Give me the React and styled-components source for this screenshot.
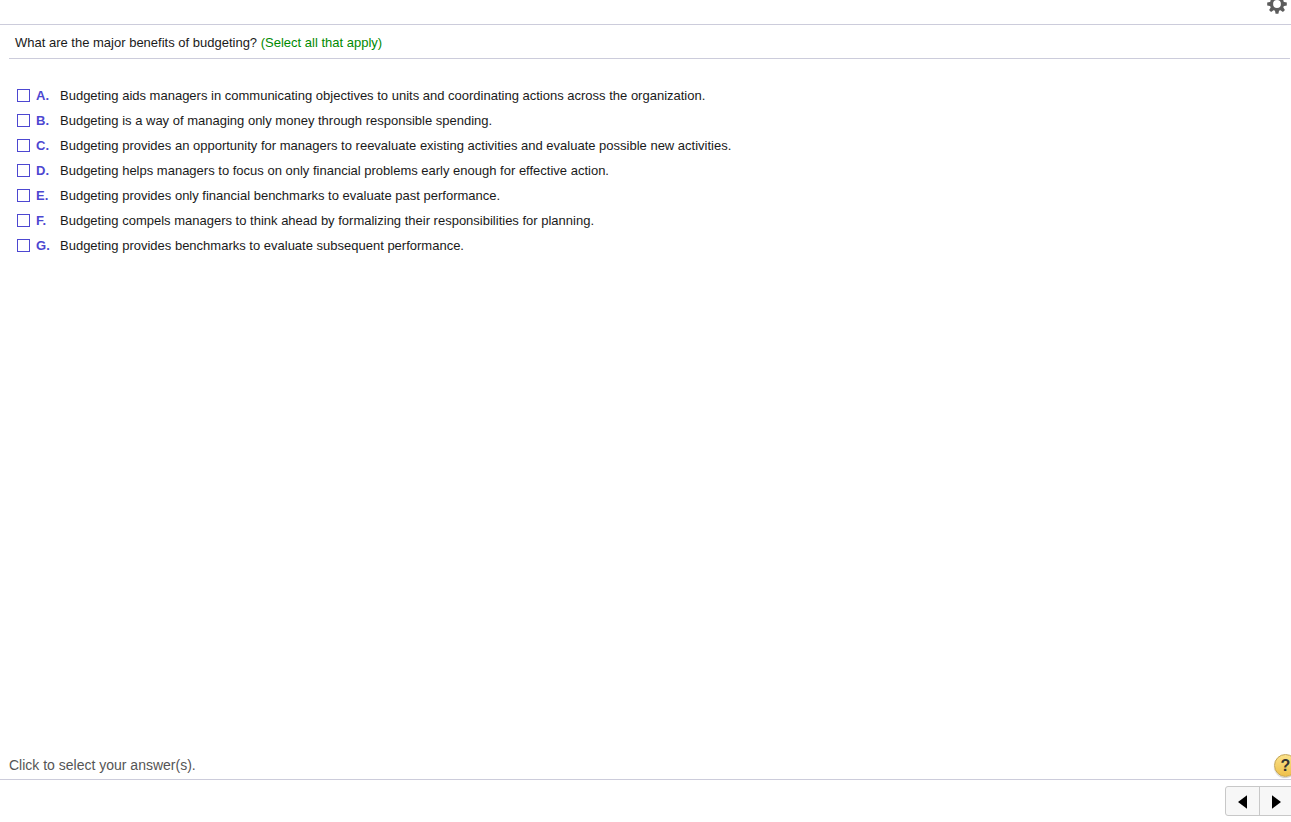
import React, { useState } from 'react'
import styled, { createGlobalStyle } from 'styled-components'

const ruleColor = '#ccccdb';
const accentColor = '#4d47d1';

const choices = [
  { letter: 'A', text: 'Budgeting aids managers in communicating objectives to units and coordinating actions across the organization.' },
  { letter: 'B', text: 'Budgeting is a way of managing only money through responsible spending.' },
  { letter: 'C', text: 'Budgeting provides an opportunity for managers to reevaluate existing activities and evaluate possible new activities.' },
  { letter: 'D', text: 'Budgeting helps managers to focus on only financial problems early enough for effective action.' },
  { letter: 'E', text: 'Budgeting provides only financial benchmarks to evaluate past performance.' },
  { letter: 'F', text: 'Budgeting compels managers to think ahead by formalizing their responsibilities for planning.' },
  { letter: 'G', text: 'Budgeting provides benchmarks to evaluate subsequent performance.' },
];

const teeth = [0, 45, 90, 135, 180, 225, 270, 315];

function GearIcon() {
  return (
    <svg width="20" height="20" viewBox="-10 -10 20 20" aria-hidden="true">
      <g fill="#5c5c5c">
        {teeth.map(angle => (
          <path key={angle} d="M-2.2 -6 L-1.4 -9.8 H1.4 L2.2 -6 Z" transform={`rotate(${angle})`}/>
        ))}
      </g>
      <circle r="5.5" fill="none" stroke="#5c5c5c" strokeWidth="3.2"/>
    </svg>
  )
}

function App() {
  const [selected, setSelected] = useState([]);

  const toggle = (letter) => {
    setSelected(selected.includes(letter)
      ? selected.filter(item => item !== letter)
      : [...selected, letter]);
  };

  return (
    <Page>
      <GlobalStyle/>
      <Header>
        <SettingsButton type="button" aria-label="Settings"><GearIcon/></SettingsButton>
      </Header>
      <Question>
        What are the major benefits of budgeting? <Hint>(Select all that apply)</Hint>
      </Question>
      <Choices>
        {choices.map(({ letter, text }) => (
          <Choice key={letter}>
            <Checkbox
              type="checkbox"
              checked={selected.includes(letter)}
              onChange={() => toggle(letter)}
            />
            <Letter>{letter}.</Letter>
            <span>{text}</span>
          </Choice>
        ))}
      </Choices>
      <StatusBar>
        <span>Click to select your answer(s).</span>
        <HelpButton type="button" aria-label="Help">?</HelpButton>
      </StatusBar>
      <Footer>
        <Pager>
          <PagerButton type="button" aria-label="Previous">
            <svg width="9" height="14" viewBox="0 0 9 14"><path d="M0 7 L9 0.2 V13.8 Z"/></svg>
          </PagerButton>
          <PagerButton type="button" aria-label="Next">
            <svg width="9" height="14" viewBox="0 0 9 14"><path d="M9 7 L0 0.2 V13.8 Z"/></svg>
          </PagerButton>
        </Pager>
      </Footer>
    </Page>
  )
}

export default App

const GlobalStyle = createGlobalStyle`
    * {
        box-sizing: border-box;
    }
    body {
        margin: 0;
        background-color: white;
        font-family: "Liberation Sans", Arial, sans-serif;
    }
    button {
        padding: 0;
        cursor: pointer;
    }
`;
const Page = styled.div`
    display: flex;
    flex-direction: column;
    min-height: 100vh;
    overflow: hidden;
    color: #1a1a1a;
    font-size: 13px;
`;
const Header = styled.header`
    display: flex;
    justify-content: flex-end;
    align-items: flex-start;
    height: 25px;
    padding-right: 4px;
    border-bottom: 1px solid ${ruleColor};
`;
const SettingsButton = styled.button`
    display: flex;
    margin-top: -6px;
    border: none;
    background: none;
`;
const Question = styled.div`
    margin: 0 1px 0 9px;
    padding: 9px 6px 6px;
    line-height: 18px;
    border-bottom: 1px solid ${ruleColor};
`;
const Hint = styled.span`
    color: #008a00;
`;
const Choices = styled.div`
    flex: 1;
    display: flex;
    flex-direction: column;
    align-items: flex-start;
    padding: 24px 17px;
`;
const Choice = styled.label`
    display: flex;
    align-items: center;
    min-height: 25px;
    cursor: pointer;
`;
const Checkbox = styled.input`
    appearance: none;
    flex: none;
    width: 13px;
    height: 13px;
    margin: 0 6px 0 0;
    border: 1px solid ${accentColor};
    background-color: white;
    &:checked {
        background-color: ${accentColor};
        box-shadow: inset 0 0 0 2px white;
    }
`;
const Letter = styled.span`
    flex: none;
    width: 24px;
    color: ${accentColor};
    font-weight: bold;
`;
const StatusBar = styled.div`
    display: flex;
    align-items: center;
    justify-content: space-between;
    height: 29px;
    padding-left: 9px;
    border-bottom: 1px solid ${ruleColor};
    color: #555;
    font-size: 14px;
`;
const HelpButton = styled.button`
    width: 23px;
    height: 23px;
    margin-right: -6px;
    padding-top: 1px;
    border: 1px solid #c4a556;
    border-radius: 50%;
    background: linear-gradient(#fbe28a, #eec04a);
    box-shadow: 0 1px 1px #ccc;
    color: #333;
    font: bold 16px "Liberation Sans", Arial, sans-serif;
`;
const Footer = styled.footer`
    display: flex;
    justify-content: flex-end;
    padding: 6px 0;
`;
const Pager = styled.div`
    display: flex;
    height: 30px;
    margin-right: -3px;
    border: 1px solid #c8c8c8;
    border-radius: 3px;
    background-color: #f7f7f7;
`;
const PagerButton = styled.button`
    display: flex;
    align-items: center;
    justify-content: center;
    width: 33px;
    padding-top: 2px;
    border: none;
    background: none;
    & + & {
        width: 34px;
        padding-right: 1px;
        border-left: 1px solid #c8c8c8;
    }
`;
